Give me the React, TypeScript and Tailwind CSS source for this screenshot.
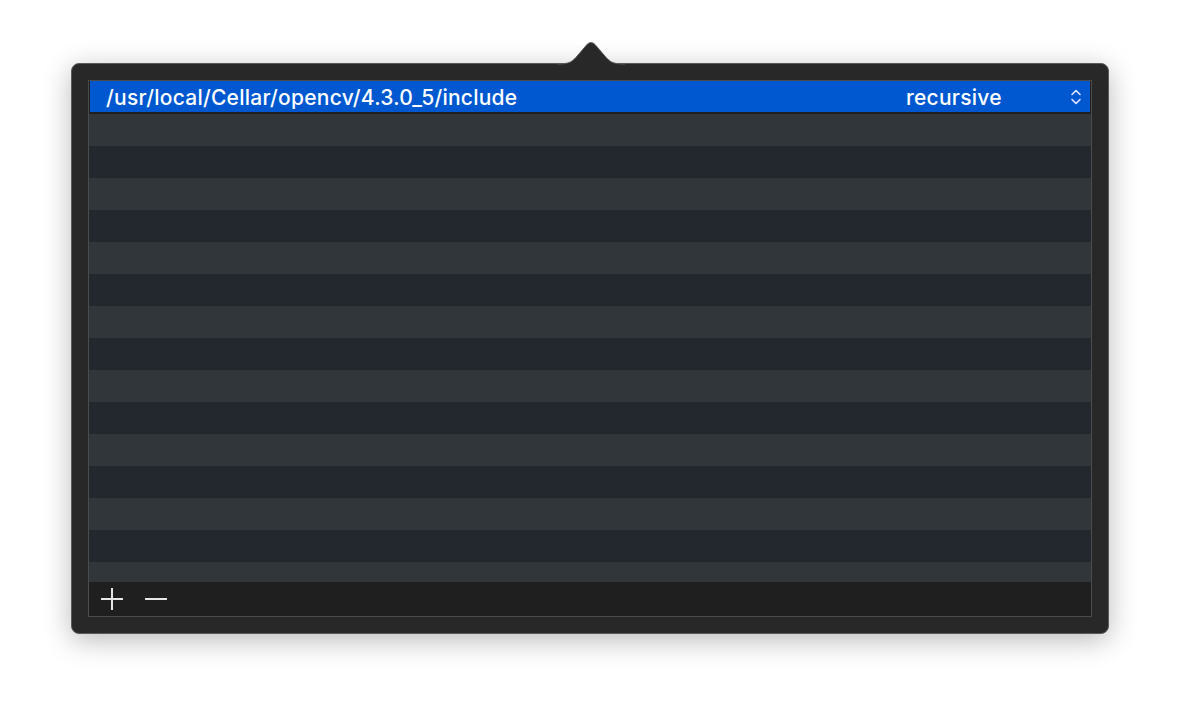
import { useMemo } from 'react';

const Chevrons = () => (
    <svg width="12" height="20" viewBox="0 0 12 20" fill="none" stroke="#dfe8ff" strokeWidth="1.6" strokeLinecap="round" strokeLinejoin="round">
        <path d="M2 7.5 L6 3.5 L10 7.5" />
        <path d="M2 12.5 L6 16.5 L10 12.5" />
    </svg>
);

const Arrow = () => (
    <svg className="absolute left-[485px] top-[-25px]" width="68" height="28" viewBox="0 0 68 28">
        <path d="M0 25 C13 25 15 23 21 16 L30 5.5 C32 3 36 3 38 5.5 L47 16 C53 23 55 25 68 25 L68 28 L0 28 Z" fill="#282828" />
        <path d="M0 25 C13 25 15 23 21 16 L30 5.5 C32 3 36 3 38 5.5 L47 16 C53 23 55 25 68 25" fill="none" stroke="#5a5a5a" strokeWidth="1" />
    </svg>
);

const App = () => {
    // 14 full striped rows then one cut-off row
    const rows = useMemo(() => Array.from({ length: 14 }, (_, i) => i), []);

    return (
        <div className="w-[1180px] h-[714px] bg-white pt-[63px] pl-[71px]" style={{ fontFamily: 'Inter, "Liberation Sans", Arial, sans-serif' }}>
            <div className="relative w-[1038px] h-[571px] rounded-[8px] bg-[#282828] border border-[#5a5a5a] p-[16px] shadow-[0_6px_28px_rgba(0,0,0,0.28)]">
                <Arrow />
                <div className="flex flex-col h-full border border-[#4c4c4c] bg-[#1f1f1f]">
                    <div className="flex items-center h-[31px] bg-[#0058d0] text-white text-[21px] font-medium tracking-[0.25px] mx-[1px]">
                        <span className="pl-[16px] pt-[2px] flex-1">/usr/local/Cellar/opencv/4.3.0_5/include</span>
                        <span className="w-[164px] pt-[2px]">recursive</span>
                        <span className="pr-[8px] pt-[1px]">
                            <Chevrons />
                        </span>
                    </div>
                    <div className="h-[2px] bg-[#1f1f1f]" />
                    {rows.map((i) => (
                        <div key={i} className={i % 2 === 0 ? 'h-[32px] bg-[#31363b]' : 'h-[32px] bg-[#23272e]'} />
                    ))}
                    <div className="h-[20px] bg-[#31363b]" />
                    <div className="flex-1 flex items-center gap-[22px] pl-[12px] bg-[#1f1f1f]">
                        <svg width="22" height="22" viewBox="0 0 22 22" stroke="#e6e6e6" strokeWidth="2">
                            <path d="M11 0 V22 M0 11 H22" />
                        </svg>
                        <svg width="22" height="22" viewBox="0 0 22 22" stroke="#e6e6e6" strokeWidth="2">
                            <path d="M0 11 H22" />
                        </svg>
                    </div>
                </div>
            </div>
        </div>
    );
};

export default App;
